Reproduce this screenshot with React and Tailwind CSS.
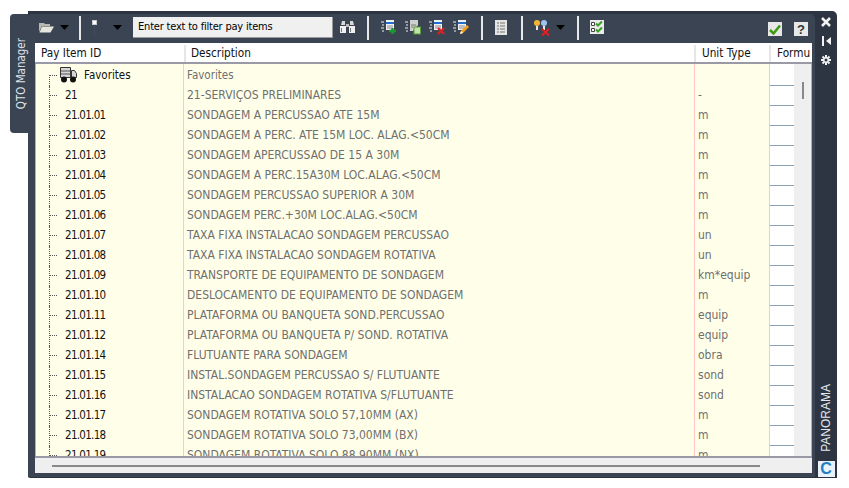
import React from 'react';

const rows = [
  ['21', '21-SERVIÇOS PRELIMINARES', '-'],
  ['21.01.01', 'SONDAGEM A PERCUSSAO ATE 15M', 'm'],
  ['21.01.02', 'SONDAGEM A PERC. ATE 15M LOC. ALAG.<50CM', 'm'],
  ['21.01.03', 'SONDAGEM APERCUSSAO DE 15 A 30M', 'm'],
  ['21.01.04', 'SONDAGEM A PERC.15A30M LOC.ALAG.<50CM', 'm'],
  ['21.01.05', 'SONDAGEM PERCUSSAO SUPERIOR A 30M', 'm'],
  ['21.01.06', 'SONDAGEM PERC.+30M LOC.ALAG.<50CM', 'm'],
  ['21.01.07', 'TAXA FIXA INSTALACAO SONDAGEM PERCUSSAO', 'un'],
  ['21.01.08', 'TAXA FIXA INSTALACAO SONDAGEM ROTATIVA', 'un'],
  ['21.01.09', 'TRANSPORTE DE EQUIPAMENTO DE SONDAGEM', 'km*equip'],
  ['21.01.10', 'DESLOCAMENTO DE EQUIPAMENTO DE SONDAGEM', 'm'],
  ['21.01.11', 'PLATAFORMA OU BANQUETA SOND.PERCUSSAO', 'equip'],
  ['21.01.12', 'PLATAFORMA OU BANQUETA P/ SOND. ROTATIVA', 'equip'],
  ['21.01.14', 'FLUTUANTE PARA SONDAGEM', 'obra'],
  ['21.01.15', 'INSTAL.SONDAGEM PERCUSSAO S/ FLUTUANTE', 'sond'],
  ['21.01.16', 'INSTALACAO SONDAGEM ROTATIVA S/FLUTUANTE', 'sond'],
  ['21.01.17', 'SONDAGEM ROTATIVA SOLO 57,10MM (AX)', 'm'],
  ['21.01.18', 'SONDAGEM ROTATIVA SOLO 73,00MM (BX)', 'm'],
  ['21.01.19', 'SONDAGEM ROTATIVA SOLO 88,90MM (NX)', 'm'],
];

const Sep = ({ className = '' }) => <div className={`w-[2px] h-[24px] mt-[2px] bg-[#e8e8e8] shrink-0 ${className}`} />;
const Caret = ({ className = '' }) => (
  <svg width="9" height="5" viewBox="0 0 9 5" className={`shrink-0 ${className}`}><path d="M0 0h9L4.500 5z" fill="#000" /></svg>
);

// stack of list rows with a blue title, used by the 4 pay item buttons
const ItemsBase = () => (
  <>
    <path d="M5 1h8v10H5z" fill="#f2f2f2" />
    <path d="M5 3h8v2H5z" fill="#1e6fd0" />
    <path d="M6 7h6M6 9h6" stroke="#8a8a8a" strokeWidth="1" />
    <path d="M0 3h3M1 6h2M0 9h3M1 12h2" stroke="#f2f2f2" strokeWidth="1" />
  </>
);

const RedX = () => <path d="M9 9l6 6M15 9l-6 6" stroke="#e02020" strokeWidth="2" />;

function Header({ label, className }) {
  return <div className={`h-full flex items-center shrink-0 border-r-2 border-[#e6e6e6] ${className}`}>{label}</div>;
}

export default function App() {
  return (
    <div className="w-[849px] h-[488px] bg-white overflow-hidden flex items-start pl-[10px] pt-[11px] font-['DejaVu_Sans_Condensed','DejaVu_Sans',sans-serif] [font-stretch:condensed] text-[12px]">
      {/* side tab */}
      <div className="mt-[3px] w-[18px] h-[119px] bg-[#3b4453] rounded-tl-[4px] rounded-bl-[4px] flex items-end justify-end pr-[1px] pb-[24px] shrink-0">
        <span className="[writing-mode:vertical-rl] rotate-180 text-[#dfe3e8] text-[11.5px] leading-none whitespace-nowrap">QTO Manager</span>
      </div>

      <div className="w-[809px] h-[467px] bg-[#2d3542] rounded-tr-[5px] rounded-bl-[2px] flex shrink-0">
        {/* main panel */}
        <div className="w-[787px] h-[463px] mt-[3px] bg-[#3b4453] rounded-tr-[5px] rounded-tl-[3px] flex flex-col">
          <div className="h-[29px] flex items-center shrink-0 pb-[3px]">
            <svg width="15" height="11" viewBox="0 0 15 11" className="ml-[11px]">
              <path d="M0 1h5l1 1h5v2H3L0 10z" fill="#b8b8b0" />
              <path d="M3 4.500h12L11.500 10.500H.5z" fill="#e6e6dc" />
            </svg>
            <Caret className="ml-[6px]" />
            <Sep className="ml-[10px]" />
            <svg width="8" height="18" viewBox="0 0 8 18" className="ml-[10px] mt-[2px]">
              <rect x="1.500" y="1.500" width="4" height="4" fill="#fff" stroke="#ccc" />
              <path d="M3.500 7v10" stroke="#4a5362" strokeDasharray="1 1" />
            </svg>
            <Caret className="ml-[14px]" />
            <div className="ml-[11px] w-[200px] h-[21px] bg-[#f0f0f0] border-b border-r border-[#999] flex items-center pl-[5px] text-black text-[11px] tracking-[-0.2px] leading-none">Enter text to filter pay items</div>
            <svg width="15" height="14" viewBox="0 0 15 14" className="ml-[7px]">
              <path d="M1 5l1-4h3v4zM10 1h3l1 4h-4z" fill="#d8d8d8" />
              <path d="M0 6h6v7H0zM9 6h6v7H9z" fill="#f0f0f0" />
              <path d="M6 4h3v3H6z" fill="#bbb" />
              <path d="M1 8h1v4H1zM10 8h1v4h-1z" fill="#777" />
            </svg>
            <Sep className="ml-[12px]" />
            <svg width="16" height="16" viewBox="0 0 16 16" className="ml-[12px]">
              <ItemsBase />
              <path d="M8 12h7M11.500 9v6" stroke="#1a9a2a" strokeWidth="2.500" />
            </svg>
            <svg width="16" height="16" viewBox="0 0 16 16" className="ml-[8px]">
              <path d="M0 3h3M1 6h2M0 9h3M1 12h2" stroke="#f2f2f2" />
              <path d="M5 1h8v5l-5 6H5z" fill="#cfcfcf" />
              <path d="M6 6h5M6 8h2" stroke="#777" />
              <rect x="9" y="8" width="6.500" height="7" fill="#bfe3a8" stroke="#5a9a3a" />
            </svg>
            <svg width="16" height="16" viewBox="0 0 16 16" className="ml-[8px]">
              <ItemsBase />
              <RedX />
            </svg>
            <svg width="16" height="16" viewBox="0 0 16 16" className="ml-[8px]">
              <ItemsBase />
              <path d="M7 15l1-3 6-6 2 2-6 6z" fill="#f0a020" />
              <path d="M7 15l1-3 2 2z" fill="#fff" />
            </svg>
            <Sep className="ml-[12px]" />
            <svg width="12" height="15" viewBox="0 0 12 15" className="ml-[12px]">
              <path d="M0 0h12v15H0z" fill="#e4e4e4" />
              <path d="M2 3h2M5 3h5M2 6h2M5 6h5M2 9h2M5 9h5M2 12h2M5 12h5" stroke="#777" />
            </svg>
            <Sep className="ml-[14px]" />
            <svg width="16" height="17" viewBox="0 0 16 17" className="ml-[11px]">
              <circle cx="3" cy="4" r="3" fill="#f5b532" />
              <circle cx="10" cy="4" r="3" fill="#9cc4ee" />
              <path d="M2 7h2v4H2zM9 7h2v4H9z" fill="#e8e8e8" />
              <path d="M8 10l7 6.500M15 10l-7 6.500" stroke="#e02020" strokeWidth="2" />
            </svg>
            <Caret className="ml-[6px]" />
            <Sep className="ml-[12px]" />
            <svg width="14" height="14" viewBox="0 0 14 14" className="ml-[11px]">
              <path d="M0 0h14v14H0z" fill="#eaeaea" />
              <path d="M1.500 2.500h3v3h-3zM1.500 8.500h3v3h-3z" fill="#fff" stroke="#444" />
              <path d="M6 3.500l2 2 4-4M6 9.500l2 2 4-4" fill="none" stroke="#3aa020" strokeWidth="2" />
            </svg>
            <div className="ml-auto flex items-center mr-[7px] gap-[12px] mt-[4px]">
              <div className="w-[14px] h-[14px] bg-[#e8e8e8] flex items-center justify-center">
                <svg width="12" height="11" viewBox="0 0 12 11"><path d="M1 6l3.500 3.500L11 1.500" fill="none" stroke="#3f9a10" strokeWidth="2.500" /></svg>
              </div>
              <div className="w-[14px] h-[14px] bg-[#e8e8e8] flex items-center justify-center text-[#333] font-bold text-[13px] leading-none font-['Liberation_Sans',sans-serif]">?</div>
            </div>
          </div>

          {/* grid */}
          <div className="ml-[7px] w-[777px] h-[430px] bg-white flex flex-col overflow-hidden">
            <div className="h-[21px] flex shrink-0 text-[#111] text-[11.7px] border-b-2 border-[#9a9aa6] leading-none pt-[2px]">
              <Header label="Pay Item ID" className="w-[151px] pl-[6px]" />
              <Header label="Description" className="w-[510px] pl-[5px]" />
              <Header label="Unit Type" className="w-[75px] pl-[6px]" />
              <div className="pl-[6px] h-full flex items-center overflow-hidden whitespace-nowrap w-[39px]">Formula</div>
            </div>
            <div className="flex h-[392px] overflow-hidden border-r border-l border-[#b0b0b8] leading-none">
              <div className="w-[758px] overflow-hidden">
                <div className="flex h-[22px] items-center bg-[#ffffe9]">
                  <div className="w-[148px] h-full flex items-center shrink-0 border-r border-[#ffc4c4]">
                    <div className="ml-[13px] w-[8px] h-[11px] mt-[11px] border-l border-t border-dotted border-[#555] shrink-0" />
                    <svg width="17" height="16" viewBox="0 0 17 16" className="ml-[3px] shrink-0">
                      <path d="M.5.500h10v10H.5zM11.500 3.500h3l2 3v4h-5z" fill="#d5d5d5" stroke="#333" />
                      <path d="M1 4h9M1 7h9" stroke="#555" />
                      <circle cx="4" cy="12.500" r="3" fill="#111" />
                      <circle cx="13" cy="12.500" r="3" fill="#111" />
                    </svg>
                    <span className="ml-[7px] mt-[2px] text-[#111] text-[11.5px]">Favorites</span>
                  </div>
                  <div className="w-[511px] pl-[3px] pt-[2px] h-full flex items-center shrink-0 border-r border-[#ffc4c4] text-[#6f6f6f] text-[11.5px]">Favorites</div>
                  <div className="w-[75px] h-full shrink-0 border-r border-[#ffc4c4]" />
                  <div className="flex-1 h-full bg-white border-b border-[#8ba0b0]" />
                </div>
                {rows.map((r) => (
                  <div key={r[0]} className="flex h-[20px] items-center bg-[#ffffe9]">
                    <div className="w-[148px] h-full flex shrink-0 border-r border-[#ffc4c4] items-center">
                      <div className="ml-[13px] h-full border-l border-dotted border-[#555] w-[8px] flex items-center shrink-0 pb-[2px]">
                        <div className="w-full border-t border-dotted border-[#555]" />
                      </div>
                      <span className="ml-[8px] mb-[1px] text-[#111] text-[11.5px] tracking-[-0.7px]">{r[0]}</span>
                    </div>
                    <div className="w-[511px] pl-[3px] pb-[2px] h-full flex items-center shrink-0 border-r border-[#ffc4c4] text-[#6f6f6f] whitespace-nowrap">{r[1]}</div>
                    <div className="w-[75px] pl-[3px] pb-[2px] h-full flex items-center shrink-0 border-r border-[#ffc4c4] text-[#6f6f6f]">{r[2]}</div>
                    <div className="flex-1 h-full bg-white border-b border-[#8ba0b0]" />
                  </div>
                ))}
              </div>
              <div className="w-[17px] bg-[#efefef] shrink-0 pt-[18px] flex justify-center">
                <div className="w-[2px] h-[17px] bg-[#888]" />
              </div>
            </div>
            <div className="h-[17px] bg-[#efefef] border-t-2 border-[#9a9aa6] flex items-center pl-[17px] shrink-0">
              <div className="w-[708px] h-[2px] bg-[#888]" />
            </div>
          </div>
        </div>

        {/* right strip */}
        <div className="flex-1 flex flex-col items-center pt-[5px] h-full">
          <svg width="10" height="10" viewBox="0 0 10 10" className="mt-[1px]"><path d="M1 1l8 8M9 1l-8 8" stroke="#f2f2f2" strokeWidth="2.500" /></svg>
          <svg width="9" height="10" viewBox="0 0 9 10" className="mt-[9px]"><path d="M0 0h2v10H0z" fill="#f2f2f2" /><path d="M9 1v8L4 5z" fill="#f2f2f2" /></svg>
          <svg width="10" height="10" viewBox="0 0 10 10" className="mt-[9px]">
            <path d="M5 0v10M0 5h10M1.500 1.500l7 7M8.500 1.500l-7 7" stroke="#f2f2f2" strokeWidth="2" />
            <circle cx="5" cy="5" r="1.500" fill="#2d3542" />
          </svg>
          <span className="mt-auto mb-[9px] [writing-mode:vertical-rl] rotate-180 text-[#e4e8ec] text-[12px] leading-none font-['Liberation_Sans',sans-serif]">PANORAMA</span>
          <div className="w-[17px] h-[16px] bg-[#e8f2f8] flex items-center justify-center text-[#1f7fc4] font-bold text-[16px] leading-none font-['Liberation_Sans',sans-serif] mb-[1px]">C</div>
        </div>
      </div>
    </div>
  );
}
